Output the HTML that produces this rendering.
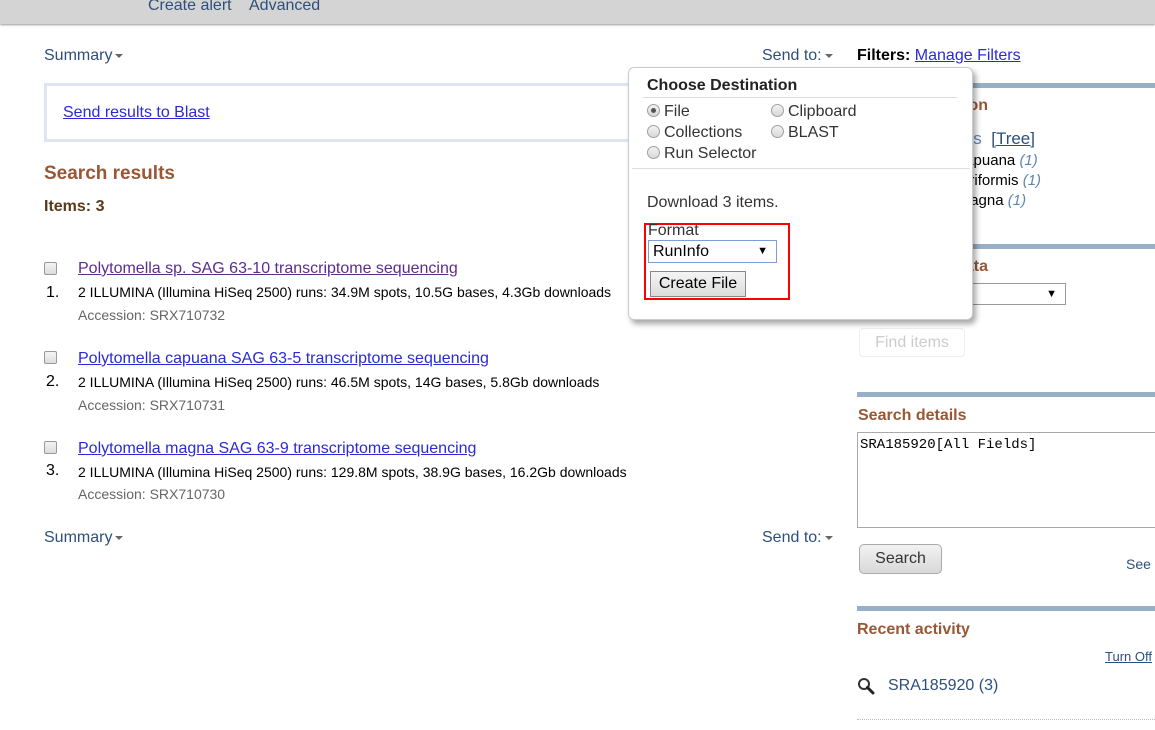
<!DOCTYPE html>
<html><head><meta charset="utf-8"><style>
body{margin:0;width:1155px;height:730px;position:relative;overflow:hidden;background:#fff;font-family:"Liberation Sans",Arial,sans-serif;color:#000}
.a{position:absolute;white-space:nowrap}
.nav{color:#2d4f7b;font-size:16px}
.tri{display:inline-block;width:0;height:0;border-left:4px solid transparent;border-right:4px solid transparent;border-top:4px solid #666;vertical-align:middle;margin-left:3px}
.brown{color:#985735;font-weight:bold}
.link{color:#2a2ad6;text-decoration:underline}
.cb{position:absolute;width:11px;height:11px;border:1px solid #999;border-radius:2px;background:linear-gradient(#f4f4f4,#ddd)}
.res{font-size:16px}
.desc{font-size:14px}
.acc{font-size:14px;color:#666}
.bar{position:absolute;left:857px;width:298px;height:5px;background:#97b0c8}
.radio{display:inline-block;width:11px;height:11px;border:1px solid #a0a0a0;border-radius:50%;background:linear-gradient(#f2f2f2,#d8d8d8);vertical-align:-1px;margin-right:4px;position:relative}
.radio.on:after{content:"";position:absolute;left:3px;top:3px;width:5px;height:5px;border-radius:50%;background:#555}
</style></head><body>
<div class="a" style="left:0;top:0;width:1155px;height:24px;background:#d4d4d4;box-shadow:0 1px 2px #999"></div>
<div class="a nav" style="left:148px;top:-3px">Create alert</div>
<div class="a nav" style="left:249px;top:-3px">Advanced</div>

<div class="a nav" style="left:44px;top:47px">Summary<span class="tri"></span></div>
<div class="a nav" style="left:762px;top:47px">Send to:<span class="tri"></span></div>
<div class="a nav" style="left:44px;top:529px">Summary<span class="tri"></span></div>
<div class="a nav" style="left:762px;top:529px">Send to:<span class="tri"></span></div>

<div class="a" style="left:44px;top:83px;width:620px;height:53px;border:3px solid #dde5ee;border-right:none"></div>
<div class="a link" style="left:63px;top:104px;font-size:16px">Send results to Blast</div>

<div class="a brown" style="left:44px;top:163px;font-size:19px">Search results</div>
<div class="a" style="left:44px;top:198px;font-size:16px;font-weight:bold;color:#5a3a1a">Items: 3</div>

<div class="cb" style="left:44px;top:262px"></div>
<div class="a link res" style="left:78px;top:260px;color:#5b2d8e">Polytomella sp. SAG 63-10 transcriptome sequencing</div>
<div class="a" style="left:46px;top:284px;font-size:16px">1.</div>
<div class="a desc" style="left:78px;top:284px">2 ILLUMINA (Illumina HiSeq 2500) runs: 34.9M spots, 10.5G bases, 4.3Gb downloads</div>
<div class="a acc" style="left:78px;top:307px">Accession: SRX710732</div>

<div class="cb" style="left:44px;top:351px"></div>
<div class="a link res" style="left:78px;top:350px">Polytomella capuana SAG 63-5 transcriptome sequencing</div>
<div class="a" style="left:46px;top:373px;font-size:16px">2.</div>
<div class="a desc" style="left:78px;top:374px">2 ILLUMINA (Illumina HiSeq 2500) runs: 46.5M spots, 14G bases, 5.8Gb downloads</div>
<div class="a acc" style="left:78px;top:397px">Accession: SRX710731</div>

<div class="cb" style="left:44px;top:441px"></div>
<div class="a link res" style="left:78px;top:440px">Polytomella magna SAG 63-9 transcriptome sequencing</div>
<div class="a" style="left:46px;top:462px;font-size:16px">3.</div>
<div class="a desc" style="left:78px;top:464px">2 ILLUMINA (Illumina HiSeq 2500) runs: 129.8M spots, 38.9G bases, 16.2Gb downloads</div>
<div class="a acc" style="left:78px;top:486px">Accession: SRX710730</div>

<!-- right column -->
<div class="a" style="left:857px;top:47px;font-size:16px"><b>Filters:</b> <span class="link">Manage Filters</span></div>
<div class="bar" style="top:83px"></div>
<div class="a brown" style="right:167px;top:97px;font-size:16px">Top Organism Selection</div>
<div class="a" style="right:120px;top:129px;font-size:17px;color:#5f86b0">Organisms &nbsp;<span style="text-decoration:underline;color:#2d4f7b">[Tree]</span></div>
<div class="a" style="left:876px;top:152px;font-size:15px">Polytomella capuana <i style="color:#5f86b0">(1)</i></div>
<div class="a" style="left:876px;top:172px;font-size:15px">Polytomella piriformis <i style="color:#5f86b0">(1)</i></div>
<div class="a" style="left:876px;top:192px;font-size:15px">Polytomella magna <i style="color:#5f86b0">(1)</i></div>
<div class="bar" style="top:244px"></div>
<div class="a brown" style="right:167px;top:258px;font-size:16px">Find related data</div>
<div class="a" style="left:880px;top:283px;width:186px;height:22px;border:1px solid #999;font-size:16px;line-height:20px;padding-left:4px;box-sizing:border-box;text-align:right;padding-right:112px">Select<span style="position:absolute;right:8px;font-size:11px">▼</span></div>
<div class="a" style="left:859px;top:328px;width:104px;height:27px;border:1px solid #eee;border-radius:4px;color:#ccc;font-size:16px;text-align:center;line-height:27px">Find items</div>

<div class="bar" style="top:392px"></div>
<div class="a brown" style="left:858px;top:407px;font-size:16px">Search details</div>
<div class="a" style="left:857px;top:432px;width:310px;height:96px;border:1px solid #aaa;box-sizing:border-box;font-family:'Liberation Mono',monospace;font-size:14px;padding:4px 2px">SRA185920[All Fields]</div>
<div class="a" style="left:859px;top:544px;width:81px;height:28px;border:1px solid #aaa;border-radius:5px;background:linear-gradient(#f2f2f2,#d8d8d8);font-size:16px;text-align:center;line-height:28px;color:#333">Search</div>
<div class="a" style="left:1126px;top:556px;font-size:14px;color:#2d4f7b">See</div>

<div class="bar" style="top:606px"></div>
<div class="a brown" style="left:857px;top:621px;font-size:16px">Recent activity</div>
<div class="a" style="left:1105px;top:649px;font-size:13px;color:#2d4f7b;text-decoration:underline">Turn Off</div>
<svg class="a" style="left:857px;top:677px" width="18" height="18" viewBox="0 0 18 18"><circle cx="7" cy="7" r="5" fill="#fff" stroke="#333" stroke-width="2"/><line x1="10.5" y1="10.5" x2="16" y2="16" stroke="#222" stroke-width="3" stroke-linecap="round"/></svg>
<div class="a" style="left:888px;top:677px;font-size:16px;color:#2d4f7b">SRA185920 (3)</div>
<div class="a" style="left:857px;top:719px;width:298px;border-top:1px dotted #bbb"></div>

<!-- popup -->
<div class="a" style="left:628px;top:67px;width:343px;height:251px;background:#fff;border:1px solid #ccc;border-radius:6px;box-shadow:3px 4px 6px rgba(0,0,0,.35)">
  <div class="a" style="left:18px;top:9px;font-size:16px;font-weight:bold;color:#222">Choose Destination</div>
  <div class="a" style="left:14px;top:29px;width:314px;border-top:1px solid #ddd"></div>
  <div class="a" style="left:18px;top:35px;font-size:16px;color:#333"><span class="radio on"></span>File</div>
  <div class="a" style="left:142px;top:35px;font-size:16px;color:#333"><span class="radio"></span>Clipboard</div>
  <div class="a" style="left:18px;top:56px;font-size:16px;color:#333"><span class="radio"></span>Collections</div>
  <div class="a" style="left:142px;top:56px;font-size:16px;color:#333"><span class="radio"></span>BLAST</div>
  <div class="a" style="left:18px;top:77px;font-size:16px;color:#333"><span class="radio"></span>Run Selector</div>
  <div class="a" style="left:3px;top:100px;width:338px;border-top:1px solid #ddd"></div>
  <div class="a" style="left:18px;top:126px;font-size:16px;color:#333">Download 3 items.</div>
  <div class="a" style="left:15px;top:155px;width:146px;height:77px;border:2px solid #f00;box-sizing:border-box"></div>
  <div class="a" style="left:19px;top:154px;font-size:16px;color:#333">Format</div>
  <div class="a" style="left:19px;top:172px;width:129px;height:23px;border:1px solid #7c9ed6;box-sizing:border-box;font-size:16px;line-height:21px;padding-left:4px">RunInfo<span style="position:absolute;right:8px;font-size:11px">▼</span></div>
  <div class="a" style="left:21px;top:203px;width:96px;height:26px;border:1px solid #888;box-sizing:border-box;background:linear-gradient(#f4f4f4,#ddd);font-size:16px;text-align:center;line-height:24px">Create File</div>
</div>
</body></html>
